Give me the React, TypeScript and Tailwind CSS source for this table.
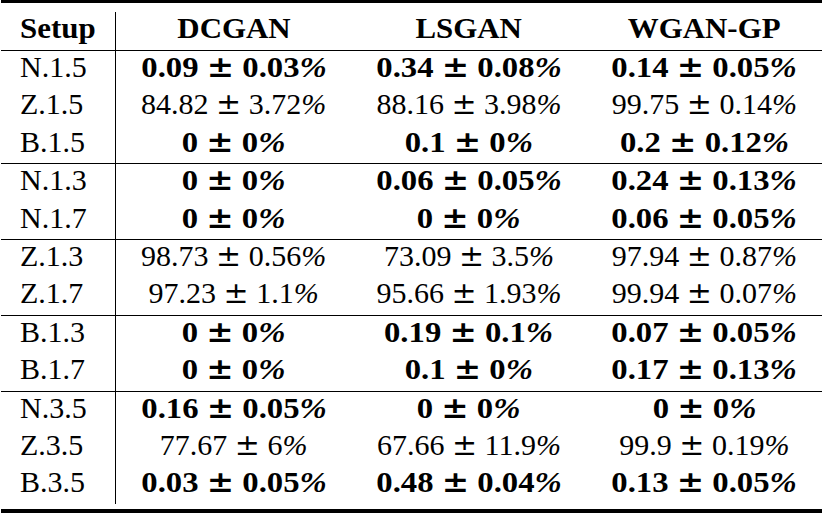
import React from 'react'

type Cell = { v: string; b: boolean }

const B = (v: string): Cell => ({ v, b: true })
const R = (v: string): Cell => ({ v, b: false })

const groups: { label: string; cells: Cell[] }[][] = [
    [
        { label: 'N.1.5', cells: [B('0.09 ± 0.03'), B('0.34 ± 0.08'), B('0.14 ± 0.05')] },
        { label: 'Z.1.5', cells: [R('84.82 ± 3.72'), R('88.16 ± 3.98'), R('99.75 ± 0.14')] },
        { label: 'B.1.5', cells: [B('0 ± 0'), B('0.1 ± 0'), B('0.2 ± 0.12')] },
    ],
    [
        { label: 'N.1.3', cells: [B('0 ± 0'), B('0.06 ± 0.05'), B('0.24 ± 0.13')] },
        { label: 'N.1.7', cells: [B('0 ± 0'), B('0 ± 0'), B('0.06 ± 0.05')] },
    ],
    [
        { label: 'Z.1.3', cells: [R('98.73 ± 0.56'), R('73.09 ± 3.5'), R('97.94 ± 0.87')] },
        { label: 'Z.1.7', cells: [R('97.23 ± 1.1'), R('95.66 ± 1.93'), R('99.94 ± 0.07')] },
    ],
    [
        { label: 'B.1.3', cells: [B('0 ± 0'), B('0.19 ± 0.1'), B('0.07 ± 0.05')] },
        { label: 'B.1.7', cells: [B('0 ± 0'), B('0.1 ± 0'), B('0.17 ± 0.13')] },
    ],
    [
        { label: 'N.3.5', cells: [B('0.16 ± 0.05'), B('0 ± 0'), B('0 ± 0')] },
        { label: 'Z.3.5', cells: [R('77.67 ± 6'), R('67.66 ± 11.9'), R('99.9 ± 0.19')] },
        { label: 'B.3.5', cells: [B('0.03 ± 0.05'), B('0.48 ± 0.04'), B('0.13 ± 0.05')] },
    ],
]

const headers = ['DCGAN', 'LSGAN', 'WGAN-GP']

// mean ± std, percent sign slanted like the TeX one
const Value = ({ cell }: { cell: Cell }) => {
    const [mean, std] = cell.v.split(' ± ')
    return (
        <span
            className={
                cell.b
                    ? 'inline-block leading-none font-bold scale-x-[1.09]'
                    : 'inline-block leading-none'
            }
        >
            {mean}{' '}
            <span className="[font-family:DejaVu_Serif,serif]">±</span>{' '}
            {std}
            <span className="italic">%</span>
        </span>
    )
}

const App = () => {
    return (
        <div className="w-[825px] h-[514px] overflow-hidden bg-white pl-px text-black [font-family:Liberation_Serif,Times_New_Roman,serif]">
            <div className="w-[821px]">
                {/* top rule */}
                <div className="h-[3px] bg-black" />
                <div className="h-[9px]" />

                {/* header */}
                <div className="grid grid-cols-[115px_1fr_1fr_1fr] h-[38px] text-[30px] leading-[31.75px] font-bold">
                    <div className="border-r border-black pl-[19px] whitespace-nowrap">
                        <span className="inline-block origin-left scale-x-[1.03] leading-none">Setup</span>
                    </div>
                    {headers.map((h) => (
                        <div key={h} className="text-center whitespace-nowrap">
                            <span className="inline-block scale-x-[1.03] leading-none">{h}</span>
                        </div>
                    ))}
                </div>

                {/* body groups */}
                {groups.map((g, gi) => (
                    <div key={gi} className="border-t border-black">
                        {g.map((row) => (
                            <div key={row.label} className="grid grid-cols-[115px_1fr_1fr_1fr] h-[37.4px] text-[30px] leading-[31.75px]">
                                <div className="border-r border-black pl-[19px] whitespace-nowrap">{row.label}</div>
                                {row.cells.map((c, ci) => (
                                    <div key={ci} className="text-center whitespace-nowrap">
                                        <Value cell={c} />
                                    </div>
                                ))}
                            </div>
                        ))}
                    </div>
                ))}

                {/* bottom rule */}
                <div className="mt-[5px] h-[4px] bg-black" />
            </div>
        </div>
    )
}

export default App
